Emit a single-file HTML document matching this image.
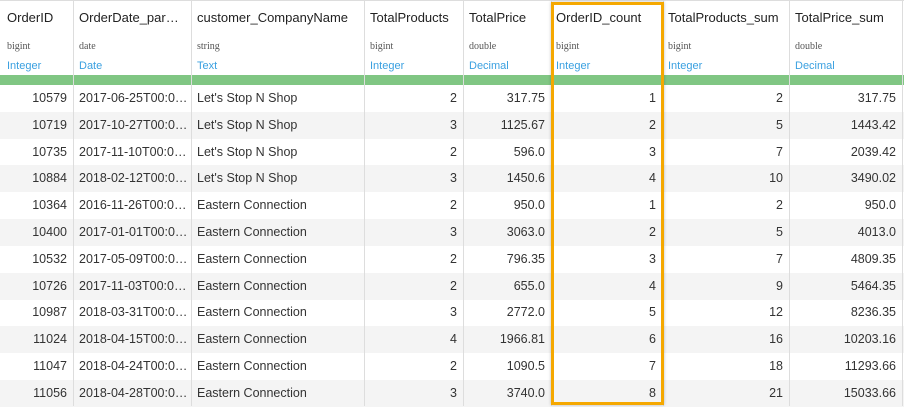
<!DOCTYPE html><html><head><style>
body{margin:0;width:904px;height:406px;overflow:hidden;background:#fff;font-family:"Liberation Sans",sans-serif;position:relative}
.r{position:absolute;left:0;width:904px;height:27px}
.s{background:#f4f4f4}
.v{position:absolute;top:0;height:406px;width:1px;background:#ddd}
.t{position:absolute;font-size:12.5px;color:#333;white-space:nowrap;line-height:27px}
.h{position:absolute;font-size:13px;color:#222;top:10px}
.ty{position:absolute;font-family:"Liberation Serif",serif;font-size:10px;color:#555;top:41px}
.lg{position:absolute;font-size:11px;color:#3aa0e0;top:60px}
</style></head><body>
<div style="position:absolute;top:0;left:0;width:904px;height:1px;background:#ddd"></div>
<div style="position:absolute;top:75px;left:0;width:904px;height:10px;background:#80c683"></div>
<div id="rows"></div>
<div class="v" style="left:73px"></div><div class="v" style="left:191px"></div><div class="v" style="left:364px"></div><div class="v" style="left:463px"></div><div class="v" style="left:551px"></div><div class="v" style="left:663px"></div><div class="v" style="left:789px"></div><div class="v" style="left:902px"></div>
<div class="h" style="left:7px">OrderID</div><div class="h" style="left:79px">OrderDate_par…</div><div class="h" style="left:197px">customer_CompanyName</div><div class="h" style="left:370px">TotalProducts</div><div class="h" style="left:469px">TotalPrice</div><div class="h" style="left:556px">OrderID_count</div><div class="h" style="left:668px">TotalProducts_sum</div><div class="h" style="left:795px">TotalPrice_sum</div>
<div class="ty" style="left:7px">bigint</div><div class="ty" style="left:79px">date</div><div class="ty" style="left:197px">string</div><div class="ty" style="left:370px">bigint</div><div class="ty" style="left:469px">double</div><div class="ty" style="left:556px">bigint</div><div class="ty" style="left:668px">bigint</div><div class="ty" style="left:795px">double</div>
<div class="lg" style="left:7px">Integer</div><div class="lg" style="left:79px">Date</div><div class="lg" style="left:197px">Text</div><div class="lg" style="left:370px">Integer</div><div class="lg" style="left:469px">Decimal</div><div class="lg" style="left:556px">Integer</div><div class="lg" style="left:668px">Integer</div><div class="lg" style="left:795px">Decimal</div>
<div style="position:absolute;left:551px;top:2px;width:107px;height:397px;border:3px solid #f5a800;box-shadow:0 0 3px rgba(0,0,0,.25)"></div>
<script>
var d=[["10579","2017-06-25","Let's Stop N Shop",2,"317.75",1,2,"317.75"],["10719","2017-10-27","Let's Stop N Shop",3,"1125.67",2,5,"1443.42"],["10735","2017-11-10","Let's Stop N Shop",2,"596.0",3,7,"2039.42"],["10884","2018-02-12","Let's Stop N Shop",3,"1450.6",4,10,"3490.02"],["10364","2016-11-26","Eastern Connection",2,"950.0",1,2,"950.0"],["10400","2017-01-01","Eastern Connection",3,"3063.0",2,5,"4013.0"],["10532","2017-05-09","Eastern Connection",2,"796.35",3,7,"4809.35"],["10726","2017-11-03","Eastern Connection",2,"655.0",4,9,"5464.35"],["10987","2018-03-31","Eastern Connection",3,"2772.0",5,12,"8236.35"],["11024","2018-04-15","Eastern Connection",4,"1966.81",6,16,"10203.16"],["11047","2018-04-24","Eastern Connection",2,"1090.5",7,18,"11293.66"],["11056","2018-04-28","Eastern Connection",3,"3740.0",8,21,"15033.66"]];
var h="";d.forEach(function(r,i){var y=85+i*26.8;h+='<div class="r'+(i%2?' s':'')+'" style="top:'+y+'px"></div>';
function R(x,t){h+='<div class="t" style="top:'+y+'px;right:'+(904-x)+'px">'+t+'</div>'}
function L(x,t){h+='<div class="t" style="top:'+y+'px;left:'+x+'px">'+t+'</div>'}
R(67,r[0]);L(79,r[1]+'T00:0…');L(197,r[2]);R(457,r[3]);R(545,r[4]);R(656,r[5]);R(783,r[6]);R(896,r[7]);});
document.getElementById("rows").outerHTML=h;
</script>
</body></html>
